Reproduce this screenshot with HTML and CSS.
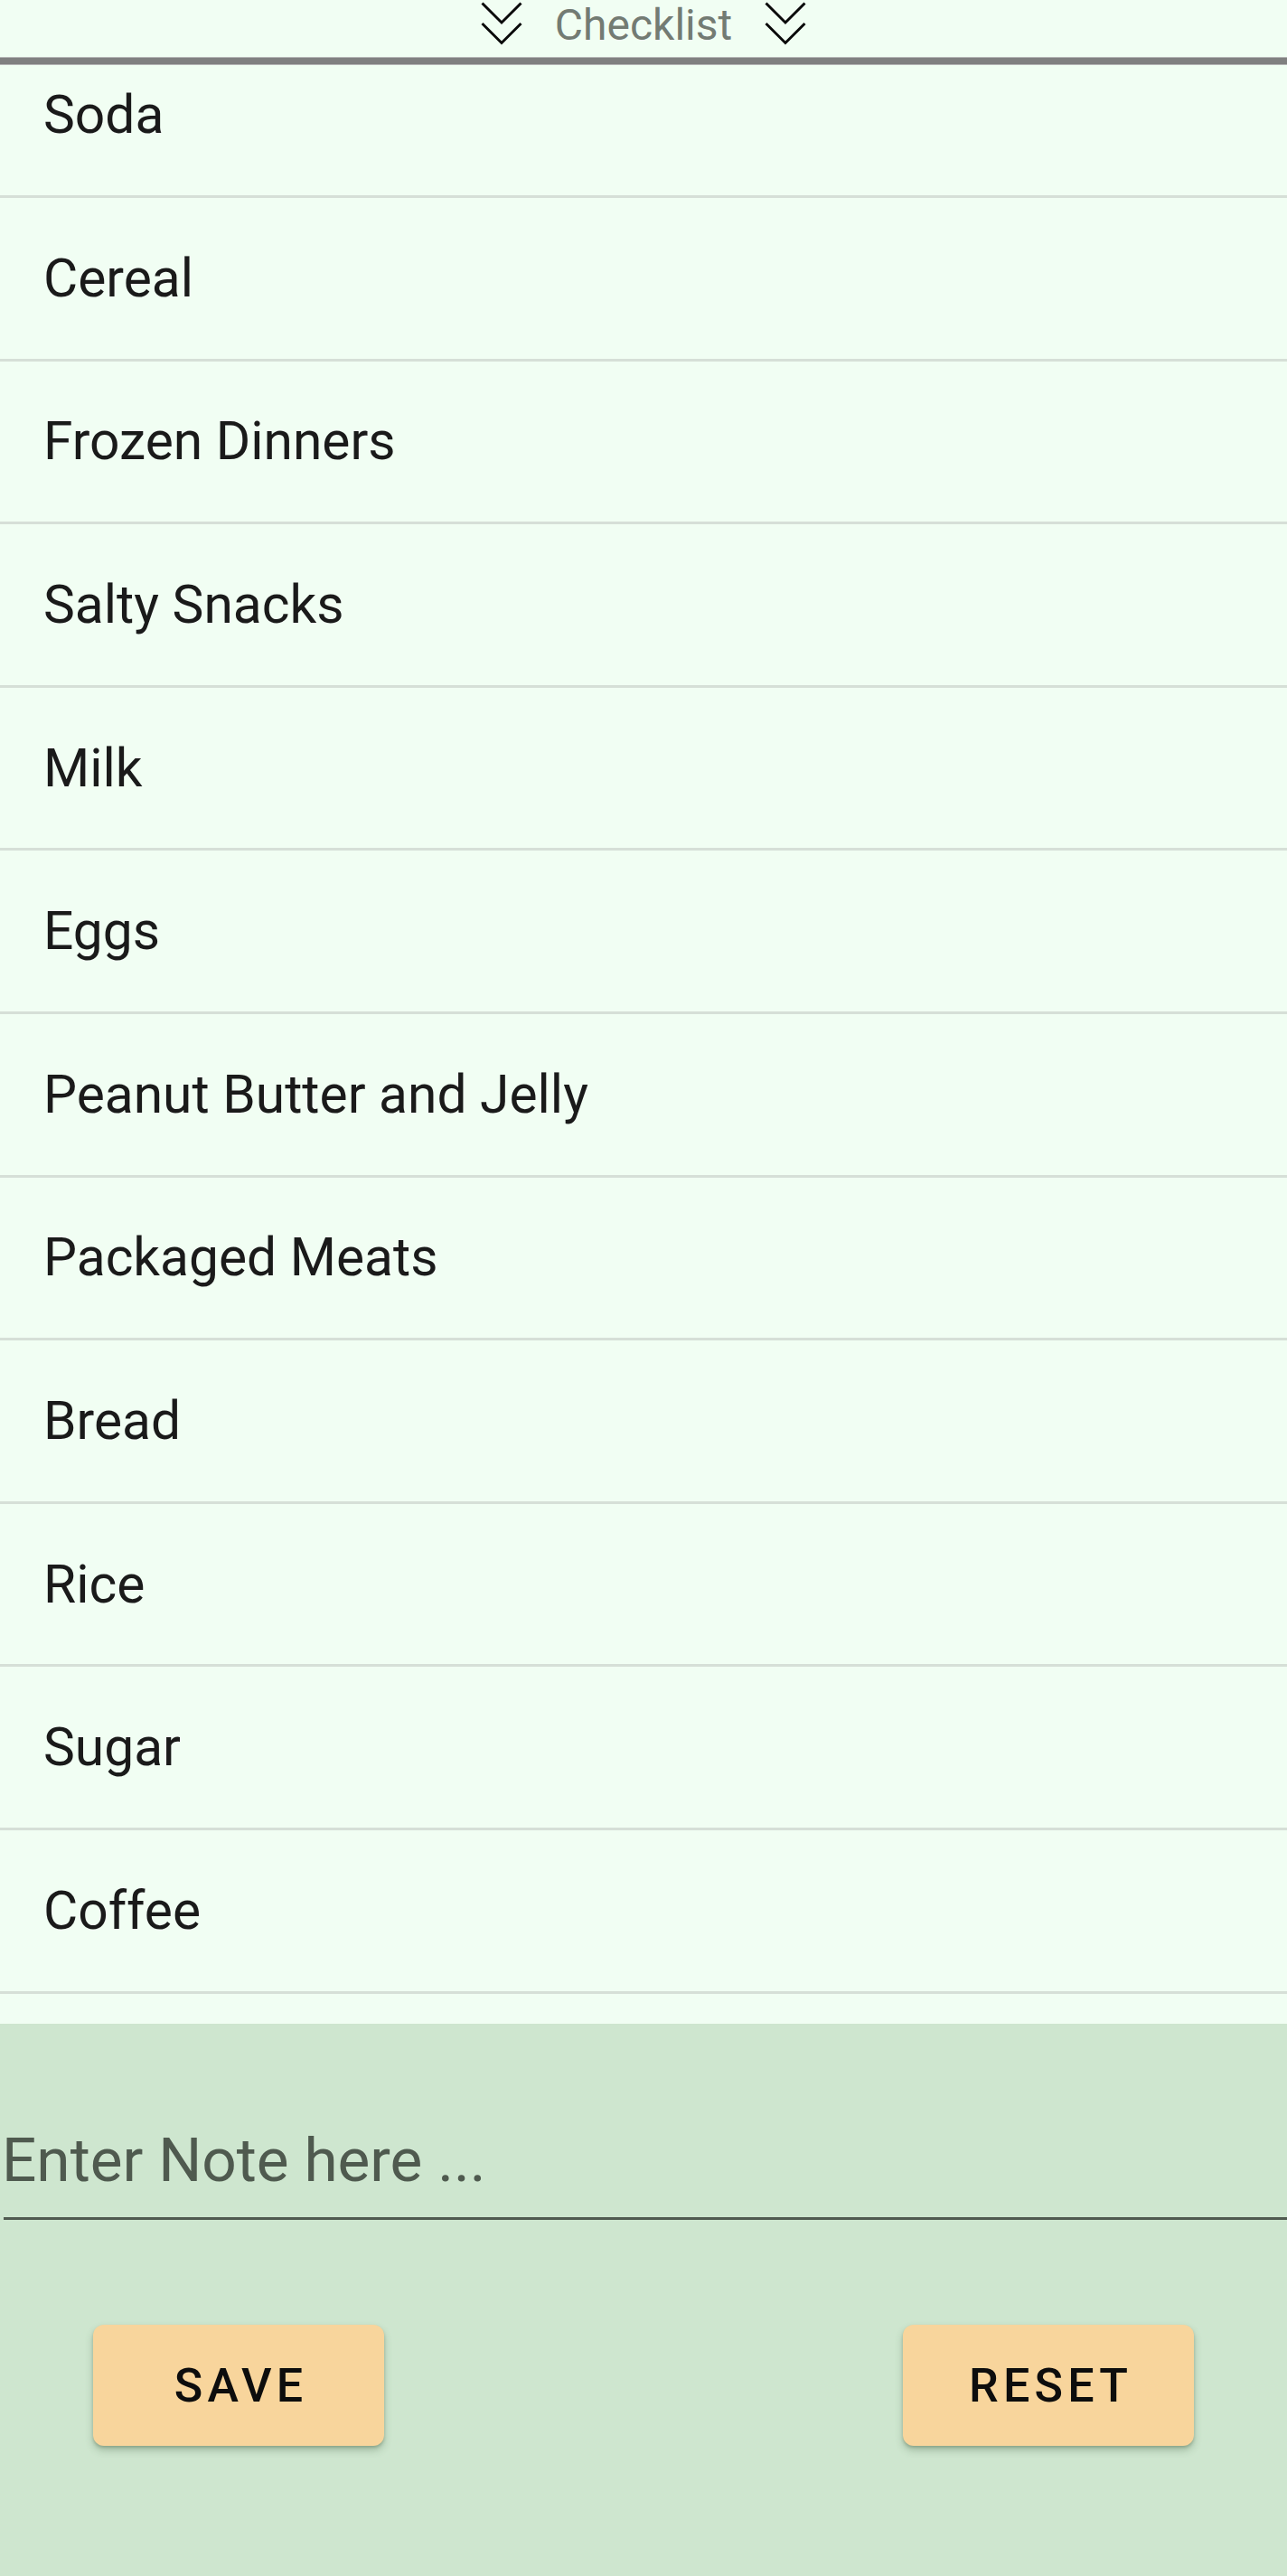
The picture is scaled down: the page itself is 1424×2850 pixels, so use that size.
FILE: index.html
```html
<!DOCTYPE html>
<html lang="en">
<head>
<meta charset="utf-8">
<title>Checklist</title>
<link rel="stylesheet" href="styles.css">
</head>
<body>
<div class="screen">
  <header class="topbar">
    <svg class="chevrons" viewBox="0 0 46 48" aria-hidden="true">
      <path d="M1.5 1.5 L23 23 L44.5 1.5 M1.5 24 L23 45.5 L44.5 24"/>
    </svg>
    <span class="title">Checklist</span>
    <svg class="chevrons" viewBox="0 0 46 48" aria-hidden="true">
      <path d="M1.5 1.5 L23 23 L44.5 1.5 M1.5 24 L23 45.5 L44.5 24"/>
    </svg>
  </header>
  <div class="divider"></div>
  <main class="list">
    <ul class="items">
      <li class="item">Soda</li>
      <li class="item">Cereal</li>
      <li class="item">Frozen Dinners</li>
      <li class="item">Salty Snacks</li>
      <li class="item">Milk</li>
      <li class="item">Eggs</li>
      <li class="item">Peanut Butter and Jelly</li>
      <li class="item">Packaged Meats</li>
      <li class="item">Bread</li>
      <li class="item">Rice</li>
      <li class="item">Sugar</li>
      <li class="item">Coffee</li>
      <li class="item"></li>
    </ul>
  </main>
  <footer class="footer">
    <div class="note">
      <div class="note-text">Enter Note here ...</div>
    </div>
    <div class="actions">
      <button class="btn" type="button">SAVE</button>
      <button class="btn" type="button">RESET</button>
    </div>
  </footer>
</div>
</body>
</html>
```

FILE: styles.css
```css
html, body {
  margin: 0;
  padding: 0;
  background: #f1fef3;
}

.screen {
  width: 1424px;
  height: 2850px;
  display: flex;
  flex-direction: column;
  overflow: hidden;
  font-family: Roboto, "Liberation Sans", sans-serif;
}

.topbar {
  height: 63px;
  flex: none;
  display: flex;
  justify-content: center;
  align-items: flex-start;
  gap: 36px;
  background: #f1fef3;
}

.chevrons {
  width: 46px;
  height: 48px;
  margin-top: 2px;
  fill: none;
  stroke: #0a0a0a;
  stroke-width: 3;
  stroke-linecap: butt;
  stroke-linejoin: miter;
}

.title {
  font-size: 48px;
  line-height: 56px;
  color: #737b73;
}

.divider {
  flex: none;
  height: 7px;
  background: #808080;
  border-top: 1px solid #b4b4b4;
  border-bottom: 1px solid #b4b4b4;
}

.list {
  flex: 1;
  overflow: hidden;
  background: #f1fef3;
}

.items {
  list-style: none;
  margin: -33.6px 0 0 0;
  padding: 0;
}

.item {
  height: 177.6px;
  border-bottom: 3px solid #d6dfd7;
  display: flex;
  align-items: center;
  padding-left: 48px;
  font-size: 58.7px;
  color: #1a1a1a;
}

.footer {
  flex: none;
  height: 611px;
  background: #cee6cf;
  display: flex;
  flex-direction: column;
}

.note {
  margin: 112px 0 0 4px;
  padding-bottom: 24px;
  border-bottom: 3px solid #505a50;
}

.note-text {
  margin-left: -2px;
  font-size: 67.5px;
  line-height: 78px;
  color: #4f5a4f;
}

.actions {
  margin-top: 116px;
  padding: 0 103px;
  display: flex;
  justify-content: space-between;
}

.btn {
  width: 322px;
  height: 134px;
  border: none;
  border-radius: 12px;
  background: #f8d59c;
  color: #0d0d0d;
  font-family: Roboto, "Liberation Sans", sans-serif;
  font-weight: 500;
  font-size: 52px;
  letter-spacing: 0.1em;
  padding: 0 0 0 0.1em;
  box-shadow: 0 5px 8px rgba(60, 90, 60, 0.3), 0 2px 3px rgba(60, 90, 60, 0.25);
}
```
